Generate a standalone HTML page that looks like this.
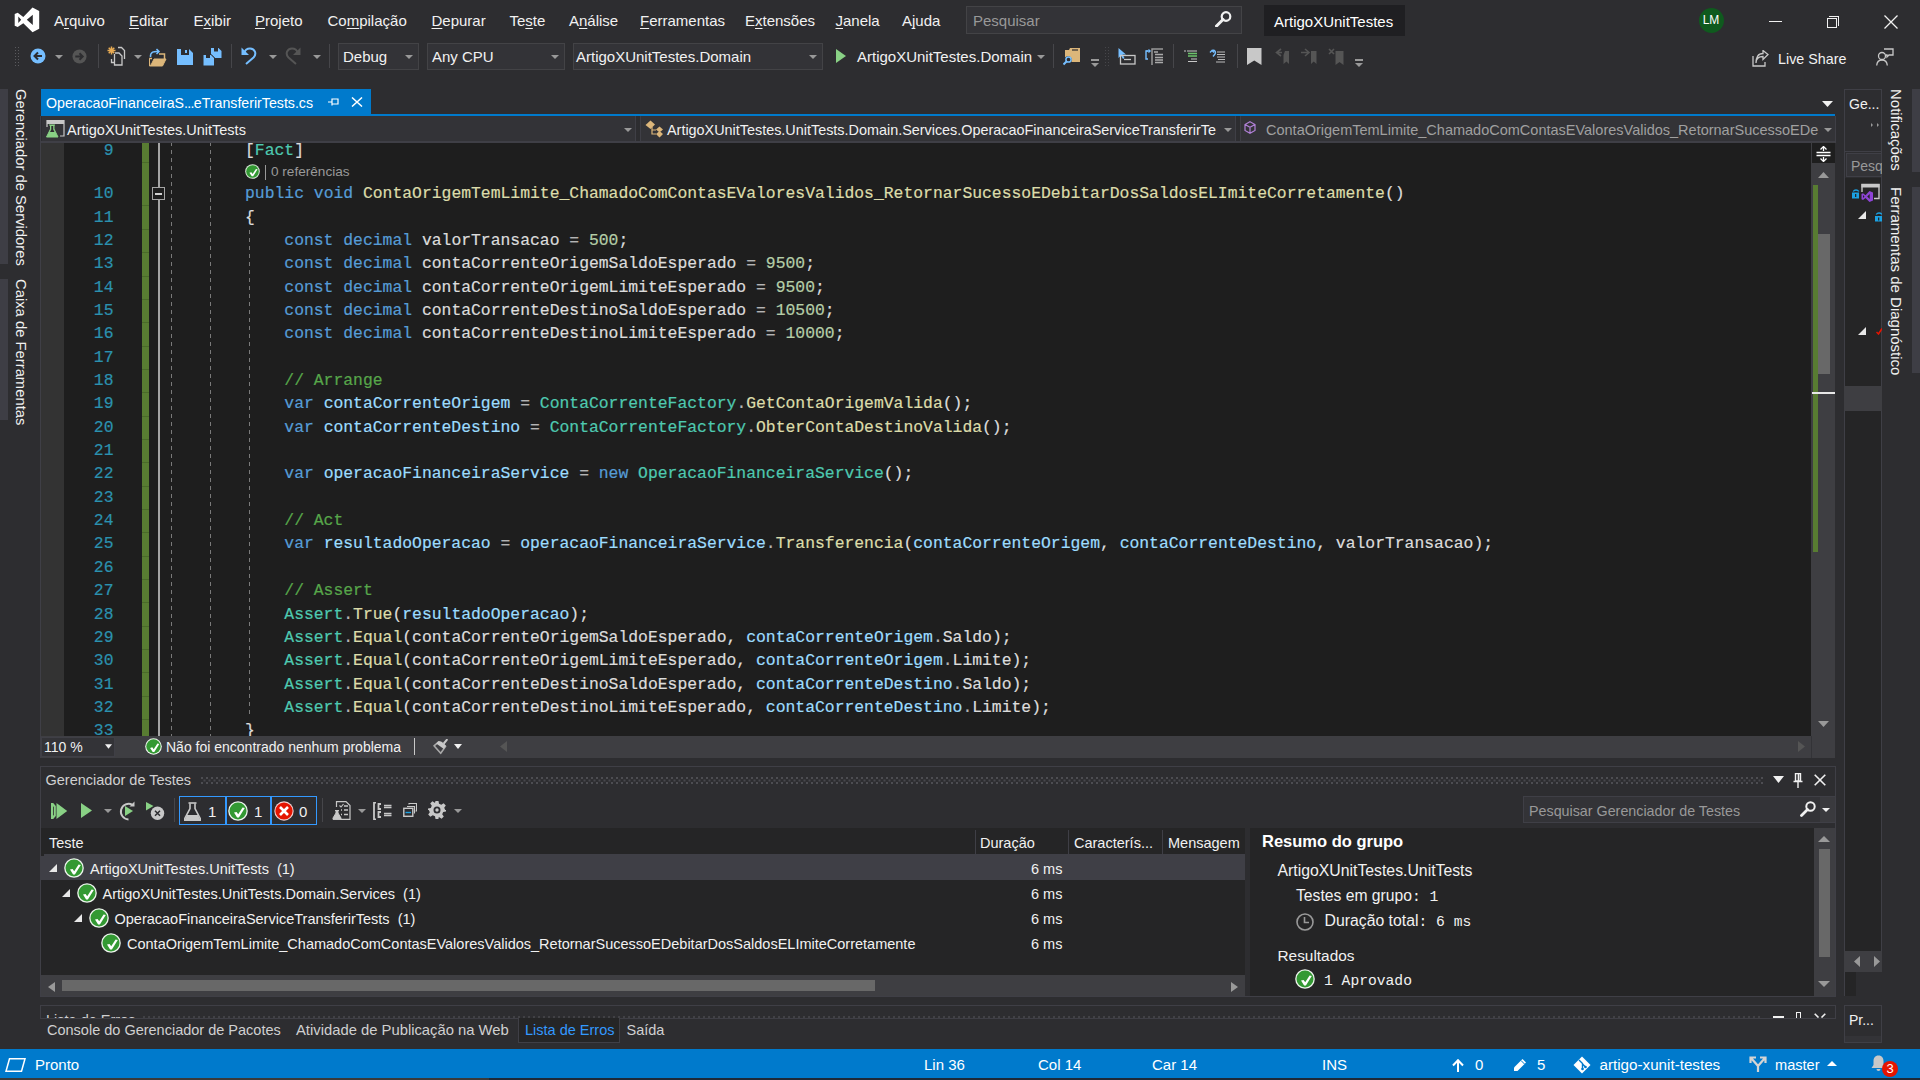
<!DOCTYPE html>
<html><head><meta charset="utf-8">
<style>
*{margin:0;padding:0;box-sizing:border-box}
html,body{width:1920px;height:1080px;overflow:hidden;background:#2d2d30;font-family:"Liberation Sans",sans-serif;color:#f1f1f1}
.a{position:absolute}
.t{position:absolute;white-space:nowrap;line-height:0;top:calc(var(--b) - 0.3465em)}
.m{-webkit-text-stroke:0.2px currentColor;position:absolute;white-space:pre;line-height:0;font-family:"Liberation Mono",monospace;top:calc(var(--b) - 0.26665em)}
.s15{font-size:15px}
.s14{font-size:14px}
u{text-decoration-thickness:1px;text-underline-offset:1.5px;text-decoration-skip-ink:none}
</style></head><body>
<!-- MENU BAR -->
<div class="a" style="left:0;top:0;width:1920px;height:40px;background:#2d2d30"></div>
<svg class="a" style="left:0;top:0" width="50" height="40" viewBox="0 0 50 40"><path fill="#fff" fill-rule="evenodd" d="M32.5 7.6 L39.2 10.9 V28.8 L32.5 32.2 L23.3 23.2 L17.7 27 L14.7 25.7 V13.9 L17.7 12.7 L23.3 16.9 Z M18.3 16.5 L21.2 19.8 L18.3 23.1 Z M32.8 14.8 L26.8 19.8 L32.8 24.9 Z"/></svg>
<div class="t s15" style="left:54px;--b:26px">A<u>r</u>quivo</div>
<div class="t s15" style="left:129px;--b:26px"><u>E</u>ditar</div>
<div class="t s15" style="left:193.5px;--b:26px">E<u>x</u>ibir</div>
<div class="t s15" style="left:255px;--b:26px"><u>P</u>rojeto</div>
<div class="t s15" style="left:327.5px;--b:26px">Co<u>m</u>pilação</div>
<div class="t s15" style="left:431.5px;--b:26px"><u>D</u>epurar</div>
<div class="t s15" style="left:509.5px;--b:26px">Te<u>s</u>te</div>
<div class="t s15" style="left:569px;--b:26px">A<u>n</u>álise</div>
<div class="t s15" style="left:640px;--b:26px"><u>F</u>erramentas</div>
<div class="t s15" style="left:745px;--b:26px">E<u>x</u>tensões</div>
<div class="t s15" style="left:835.5px;--b:26px"><u>J</u>anela</div>
<div class="t s15" style="left:902px;--b:26px">A<u>j</u>uda</div>
<!-- search -->
<div class="a" style="left:966px;top:6px;width:276px;height:28px;background:#333337;border:1px solid #434346"></div>
<div class="t s15" style="left:973px;--b:26px;color:#999">Pesquisar</div>
<svg class="a" style="left:1215px;top:11px" width="17" height="16" viewBox="0 0 17 16"><circle cx="11" cy="5.5" r="4.3" fill="none" stroke="#f1f1f1" stroke-width="2.2"/><path d="M8 8.5 L1.5 15" stroke="#f1f1f1" stroke-width="3" stroke-linecap="round"/></svg>
<div class="a" style="left:1264px;top:5px;width:141px;height:31px;background:#1f1f22"></div>
<div class="t s15" style="left:1274px;--b:27px;color:#fff">ArtigoXUnitTestes</div>
<!-- avatar -->
<div class="a" style="left:1698.5px;top:7.5px;width:25px;height:25px;border-radius:50%;background:#0f5a1e"></div>
<div class="t" style="left:1698.5px;width:25px;text-align:center;font-size:12px;--b:24.5px;color:#fff">LM</div>
<!-- window controls -->
<div class="a" style="left:1769px;top:21px;width:13px;height:1px;background:#f1f1f1"></div>
<div class="a" style="left:1829px;top:16px;width:10px;height:10px;border:1px solid #f1f1f1;border-left:none;border-bottom:none"></div>
<div class="a" style="left:1827px;top:18px;width:10px;height:10px;border:1px solid #f1f1f1;background:#2d2d30"></div>
<svg class="a" style="left:1884px;top:15px" width="14" height="14" viewBox="0 0 14 14"><path d="M0.5 0.5 L13.5 13.5 M13.5 0.5 L0.5 13.5" stroke="#f1f1f1" stroke-width="1.3"/></svg>

<!-- TOOLBAR -->
<div class="a" style="left:14px;top:46px;width:6px;height:21px;background-image:radial-gradient(circle,#5a5a5e 0.8px,transparent 1px);background-size:3px 3px"></div>
<svg class="a" style="left:30px;top:48px" width="16" height="16" viewBox="0 0 16 16"><circle cx="8" cy="8" r="7.5" fill="#75beff"/><path d="M12 8 H5 M8 4.5 L4.5 8 L8 11.5" stroke="#2d2d30" stroke-width="2" fill="none"/></svg>
<svg class="a" style="left:55px;top:55px" width="8" height="4" viewBox="0 0 8 4"><path d="M0 0H8L4 4Z" fill="#999"/></svg>
<svg class="a" style="left:72px;top:49px" width="15" height="15" viewBox="0 0 16 16"><circle cx="8" cy="8" r="7.5" fill="#555"/><path d="M3.5 8 H11 M8 4.5 L11.5 8 L8 11.5" stroke="#2d2d30" stroke-width="2" fill="none"/></svg>
<div class="a" style="left:98px;top:44px;width:1px;height:24px;background:#46464a"></div>
<svg class="a" style="left:107px;top:46px" width="19" height="20" viewBox="0 0 19 20">
<path d="M4.5 0.5 V8.5 M0.5 4.5 H8.5 M1.7 1.7 L7.3 7.3 M7.3 1.7 L1.7 7.3" stroke="#e8ab53" stroke-width="1.5"/>
<path d="M11 1.5 H14.5 L17.5 4.5 V13" stroke="#c8c8c8" stroke-width="1.3" fill="none"/>
<path d="M8 7 H12 L15 10 V19 H7.5 V8" stroke="#c8c8c8" stroke-width="1.3" fill="#2d2d30"/>
<path d="M4.5 13 V16.5 H7" stroke="#c8c8c8" stroke-width="1.3" fill="none"/>
</svg>
<svg class="a" style="left:134px;top:55px" width="8" height="4" viewBox="0 0 8 4"><path d="M0 0H8L4 4Z" fill="#999"/></svg>
<svg class="a" style="left:149px;top:48px" width="18" height="19" viewBox="0 0 18 19">
<path d="M0.5 10.5 V18 H13.5 L17 11 H5 L1.5 18" fill="#dcb67a" stroke="#dcb67a" stroke-width="1"/>
<path d="M1 11 V10.5 H3 M10 6 H15.5 V11" fill="none" stroke="#dcb67a" stroke-width="1.5"/>
<path d="M1.5 9 C1 4 5 3 9.5 3.5 M7.5 1 L10 3.5 L7.5 6" fill="none" stroke="#75beff" stroke-width="1.5"/>
</svg>
<svg class="a" style="left:177px;top:49px" width="16" height="16" viewBox="0 0 16 16"><path d="M0 0 H12 L16 4 V16 H0 Z" fill="#75beff"/><path d="M4 0 V6 H12 V0 Z" fill="#2d2d30"/><rect x="8" y="1" width="2" height="3" fill="#75beff"/></svg>
<svg class="a" style="left:203px;top:47px" width="19" height="19" viewBox="0 0 19 19"><path d="M8 1 H15.5 L18.5 4 V11 H12 L8 7 Z" fill="#75beff"/><path d="M11 0.5 V4.5 H15 V0.5 Z" fill="#2d2d30"/><path d="M0 7.5 H8 L11.5 11 V19 H0 Z" fill="#75beff" stroke="#2d2d30" stroke-width="1"/><path d="M3 7.5 V11 H7 V7.5 Z" fill="#2d2d30"/></svg>
<div class="a" style="left:231px;top:44px;width:1px;height:24px;background:#46464a"></div>
<svg class="a" style="left:241px;top:47px" width="16" height="18" viewBox="0 0 16 18"><path d="M5 17 L12.5 10.5 C16 7 14 1.5 9 1.5 C6 1.5 4 3.5 3.5 5.5" fill="none" stroke="#75beff" stroke-width="2"/><path d="M0.5 0.5 V8 H8 Z" fill="#75beff"/></svg>
<svg class="a" style="left:269px;top:55px" width="8" height="4" viewBox="0 0 8 4"><path d="M0 0H8L4 4Z" fill="#999"/></svg>
<svg class="a" style="left:285px;top:47px" width="16" height="18" viewBox="0 0 16 18"><path d="M11 17 L3.5 10.5 C0 7 2 1.5 7 1.5 C10 1.5 12 3.5 12.5 5.5" fill="none" stroke="#555" stroke-width="2"/><path d="M15.5 0.5 V8 H8 Z" fill="#555"/></svg>
<svg class="a" style="left:313px;top:55px" width="8" height="4" viewBox="0 0 8 4"><path d="M0 0H8L4 4Z" fill="#999"/></svg>
<div class="a" style="left:329px;top:44px;width:1px;height:24px;background:#46464a"></div>
<!-- combos -->
<div class="a" style="left:338px;top:43px;width:81px;height:27px;background:#333337;border:1px solid #434346"></div>
<div class="t s15" style="left:343px;--b:62px">Debug</div>
<svg class="a" style="left:405px;top:55px" width="8" height="4" viewBox="0 0 8 4"><path d="M0 0H8L4 4Z" fill="#999"/></svg>
<div class="a" style="left:427px;top:43px;width:138px;height:27px;background:#333337;border:1px solid #434346"></div>
<div class="t s15" style="left:432px;--b:62px">Any CPU</div>
<svg class="a" style="left:551px;top:55px" width="8" height="4" viewBox="0 0 8 4"><path d="M0 0H8L4 4Z" fill="#999"/></svg>
<div class="a" style="left:573px;top:43px;width:250px;height:27px;background:#333337;border:1px solid #434346"></div>
<div class="t s15" style="left:576px;--b:62px">ArtigoXUnitTestes.Domain</div>
<svg class="a" style="left:809px;top:55px" width="8" height="4" viewBox="0 0 8 4"><path d="M0 0H8L4 4Z" fill="#999"/></svg>
<svg class="a" style="left:836px;top:49px" width="10" height="14" viewBox="0 0 10 14"><path d="M0 0 L10 7 L0 14Z" fill="#89d185"/></svg>
<div class="t s15" style="left:857px;--b:62px">ArtigoXUnitTestes.Domain</div>
<svg class="a" style="left:1037px;top:55px" width="8" height="4" viewBox="0 0 8 4"><path d="M0 0H8L4 4Z" fill="#999"/></svg>
<div class="a" style="left:1053px;top:44px;width:1px;height:24px;background:#46464a"></div>
<svg class="a" style="left:1063px;top:47px" width="18" height="19" viewBox="0 0 18 19"><path d="M2 3 H6 L7 1 H17 V15 H2 Z" fill="#dcb67a"/><path d="M9 3 H15" stroke="#2d2d30" stroke-width="1.2"/><circle cx="5" cy="13" r="3.8" fill="#2d2d30"/><circle cx="5.5" cy="12.5" r="2.6" fill="none" stroke="#75beff" stroke-width="1.5"/><path d="M3.5 14.5 L0.5 17.5" stroke="#75beff" stroke-width="2"/></svg>
<div class="a" style="left:1091px;top:59px;width:8px;height:1.5px;background:#999"></div>
<svg class="a" style="left:1091px;top:63px" width="8" height="4" viewBox="0 0 8 4"><path d="M0 0H8L4 4Z" fill="#999"/></svg>
<div class="a" style="left:1104px;top:46px;width:6px;height:21px;background-image:radial-gradient(circle,#46464a 0.8px,transparent 1px);background-size:3px 3px"></div>
<svg class="a" style="left:1118px;top:48px" width="18" height="17" viewBox="0 0 18 17"><path d="M0.5 0 V10 L3 7.5 L5 11 L6.5 10 L4.5 6.5 H8 Z" fill="#75beff"/><rect x="2.5" y="7.5" width="14.5" height="8.5" fill="none" stroke="#c8c8c8" stroke-width="1.3"/><path d="M6 11.5 H13" stroke="#c8c8c8" stroke-width="1.3"/></svg>
<svg class="a" style="left:1145px;top:48px" width="18" height="18" viewBox="0 0 18 18"><path d="M3 3 H1 V11 H3" fill="none" stroke="#75beff" stroke-width="1.4"/><path d="M1 3 H5 M3.5 1.5 L5.2 3 L3.5 4.5" stroke="#75beff" stroke-width="1.2" fill="none"/><path d="M7 17 V1 H18" stroke="#999" stroke-width="1.5" fill="none"/><path d="M9 4 H13 M10 6.5 H18 M10 9.5 H18 M10 12 H18 M10 14.5 H18" stroke="#aaa" stroke-width="1.3"/></svg>
<div class="a" style="left:1173px;top:44px;width:1px;height:24px;background:#46464a"></div>
<svg class="a" style="left:1184px;top:50px" width="14" height="13" viewBox="0 0 14 13"><path d="M0 1 H2 M3 1 H13 M4 11.5 H13 M7 9 H13" stroke="#c8c8c8" stroke-width="1.2"/><path d="M4 3.5 H13 M4 6 H13" stroke="#6cc36b" stroke-width="1.4"/></svg>
<svg class="a" style="left:1209px;top:49px" width="17" height="14" viewBox="0 0 17 14"><path d="M1 3.5 L3 1.5 L5 3.5 M3 1.5 C6 0.5 7 3 6 5 L4 7.5" fill="none" stroke="#75beff" stroke-width="1.4"/><path d="M8 3 H16 M8 5.5 H16 M8 8 H16 M9 10.5 H16 M7 13 H16" stroke="#bbb" stroke-width="1.2"/></svg>
<div class="a" style="left:1237px;top:44px;width:1px;height:24px;background:#46464a"></div>
<svg class="a" style="left:1247px;top:48px" width="15" height="17" viewBox="0 0 15 17"><path d="M0 0 H14.5 V17 L7.25 12.5 L0 17 Z" fill="#c8c8c8"/></svg>
<svg class="a" style="left:1275px;top:48px" width="15" height="16" viewBox="0 0 15 16"><path d="M6 1 L1.5 4.5 L6 8 M1.5 4.5 H7" stroke="#555" stroke-width="1.6" fill="none"/><path d="M10 3 H14 V16 L11.5 13.5 L8.5 16 V7" fill="#555"/></svg>
<svg class="a" style="left:1301px;top:48px" width="16" height="16" viewBox="0 0 16 16"><path d="M4 1 L8 4.5 L4 8 M0 4.5 H8" stroke="#555" stroke-width="1.6" fill="none"/><path d="M10 3 H15.5 V16 L12.75 13.5 L10 16 Z" fill="#555"/></svg>
<svg class="a" style="left:1328px;top:48px" width="16" height="17" viewBox="0 0 16 17"><path d="M1 1 L6 6 M6 1 L1 6" stroke="#555" stroke-width="1.6"/><path d="M7.5 3 H15.5 V17 L11.5 14 L7.5 17 Z" fill="#555"/></svg>
<div class="a" style="left:1355px;top:59px;width:8px;height:1.5px;background:#999"></div>
<svg class="a" style="left:1355px;top:63px" width="8" height="4" viewBox="0 0 8 4"><path d="M0 0H8L4 4Z" fill="#999"/></svg>
<!-- live share -->
<svg class="a" style="left:1752px;top:50px" width="17" height="17" viewBox="0 0 17 17"><path d="M1 6 V16 H13 V12" fill="none" stroke="#c8c8c8" stroke-width="1.3"/><path d="M4 13 C4 8 7 6.5 11 6.5 V9.5 L16 4.5 L11 0.5 V3.5 C6 3.5 4 7 4 13Z" fill="none" stroke="#c8c8c8" stroke-width="1.3"/></svg>
<div class="t" style="left:1778px;--b:64px;font-size:14.3px">Live Share</div>
<svg class="a" style="left:1876px;top:48px" width="18" height="18" viewBox="0 0 18 18"><circle cx="6" cy="8" r="3.5" fill="none" stroke="#c8c8c8" stroke-width="1.3"/><path d="M0.7 17.5 C1 13 3 12 6 12 C9 12 11 13 11.3 17.5" fill="none" stroke="#c8c8c8" stroke-width="1.3"/><path d="M8 1 H17 V7 H13 L11 9 V7 H10" fill="none" stroke="#c8c8c8" stroke-width="1.3"/></svg>
<!-- LEFT STRIP -->
<div class="a" style="left:0;top:89px;width:8px;height:175px;background:#3e3e45"></div>
<div class="a" style="left:0;top:279px;width:8px;height:141px;background:#3e3e45"></div>
<div class="t" style="left:16px;top:89px;line-height:normal;transform-origin:0 0;transform:translate(13px,0) rotate(90deg);font-size:14.8px">Gerenciador de Servidores</div>
<div class="t" style="left:16px;top:279px;line-height:normal;transform-origin:0 0;transform:translate(13px,0) rotate(90deg);font-size:14.8px">Caixa de Ferramentas</div>
<!-- DOC TAB -->
<div class="a" style="left:41px;top:89px;width:330px;height:25px;background:#007acc"></div>
<div class="a" style="left:41px;top:114px;width:1794px;height:2px;background:#007acc"></div>
<div class="t" style="left:46px;--b:108px;font-size:14.2px;color:#fff">OperacaoFinanceiraS<span style="letter-spacing:-0.7px">...</span>eTransferirTests.cs</div>
<svg class="a" style="left:328px;top:97px" width="11" height="10" viewBox="0 0 11 10"><path d="M0 5 H4 M4 8.5 V1.5 M4.5 2 H10 V7 H4.5" fill="none" stroke="#fff" stroke-width="1.2"/></svg>
<svg class="a" style="left:351px;top:97px" width="12" height="10" viewBox="0 0 12 10"><path d="M1 0.5 L11 9.5 M11 0.5 L1 9.5" stroke="#fff" stroke-width="1.5"/></svg>
<svg class="a" style="left:1822px;top:100.5px" width="11" height="6" viewBox="0 0 11 6"><path d="M0 0H11L5.5 6Z" fill="#f1f1f1"/></svg>
<!-- NAV BAR -->
<div class="a" style="left:40px;top:116px;width:1796px;height:27px;background:#2d2d30;border-left:1px solid #3f3f46;border-right:1px solid #3f3f46;border-bottom:2px solid #3f3f46"></div>
<div class="a" style="left:42px;top:116px;width:594px;height:25px;background:#333337;border-right:1px solid #3f3f46"></div>
<div class="a" style="left:640px;top:116px;width:596px;height:25px;background:#333337;border-left:1px solid #3f3f46;border-right:1px solid #3f3f46"></div>
<div class="a" style="left:1240px;top:116px;width:595px;height:25px;background:#333337;border-left:1px solid #3f3f46"></div>
<svg class="a" style="left:46px;top:120px" width="19" height="18" viewBox="0 0 19 18"><path d="M1 7 V0.5 H18 V16 H14" fill="none" stroke="#c8c8c8" stroke-width="1.2"/><path d="M1 1 H18 V4 H1Z" fill="#c8c8c8"/><path d="M3 5 H9 M4.5 5 V9 L0.5 17 H12 L8 9 V5" fill="#89d185" stroke="#89d185" stroke-width="1"/><path d="M5.3 6 V9.5 L4 12 H8.5 L7.2 9.5 V6Z" fill="#2d2d30"/></svg>
<div class="t" style="left:67px;--b:135px;font-size:14.5px">ArtigoXUnitTestes.UnitTests</div>
<svg class="a" style="left:624px;top:128px" width="8" height="4" viewBox="0 0 8 4"><path d="M0 0H8L4 4Z" fill="#999"/></svg>
<svg class="a" style="left:645px;top:120px" width="19" height="18" viewBox="0 0 19 18"><path d="M0.5 5 L5.5 0.5 L10 4.5 L5.5 9 Z" fill="#dcb67a"/><path d="M11 9.5 L14.5 6.5 L18 9.5 L14.5 12.5Z M11 14 L14.5 11 L18 14 L14.5 17.5Z" fill="#dcb67a"/><path d="M7 7 V14 H11 M7 10 H11" fill="none" stroke="#dcb67a" stroke-width="1.2"/></svg>
<div class="t" style="left:667px;--b:135px;font-size:14.4px">ArtigoXUnitTestes.UnitTests.Domain.Services.OperacaoFinanceiraServiceTransferirTe</div>
<svg class="a" style="left:1224px;top:128px" width="8" height="4" viewBox="0 0 8 4"><path d="M0 0H8L4 4Z" fill="#999"/></svg>
<svg class="a" style="left:1244px;top:121px" width="12" height="13" viewBox="0 0 12 13"><path d="M6 0.8 L11 3.5 V9.5 L6 12.2 L1 9.5 V3.5 Z M1 3.5 L6 6.3 L11 3.5 M6 6.3 V12.2" fill="none" stroke="#b180d7" stroke-width="1.2"/></svg>
<div class="t" style="left:1266px;--b:135px;font-size:14.5px;color:#a0a0a0">ContaOrigemTemLimite_ChamadoComContasEValoresValidos_RetornarSucessoEDe</div>
<svg class="a" style="left:1824px;top:128px" width="8" height="4" viewBox="0 0 8 4"><path d="M0 0H8L4 4Z" fill="#999"/></svg>

<!-- EDITOR FRAME -->
<div class="a" style="left:40px;top:142px;width:1px;height:616px;background:#3f3f46"></div>
<div class="a" style="left:41px;top:143px;width:1770px;height:593px;background:#1e1e1e"></div>
<div class="a" style="left:41px;top:143px;width:23px;height:593px;background:#333333"></div>
<!-- vscroll -->
<div class="a" style="left:1811px;top:142px;width:24px;height:594px;background:#3e3e42"></div>
<div class="a" style="left:1812px;top:143px;width:23px;height:20px;background:#1e1e1e"></div>
<svg class="a" style="left:1816px;top:146px" width="15" height="16" viewBox="0 0 15 16"><path d="M0.5 6.5 H14.5 M0.5 9.5 H14.5" stroke="#fff" stroke-width="1.6"/><path d="M7.5 1 V5 M7.5 11 V15" stroke="#fff" stroke-width="1.3"/><path d="M4.5 3.5 L7.5 0.5 L10.5 3.5 M4.5 12.5 L7.5 15.5 L10.5 12.5" fill="none" stroke="#fff" stroke-width="1.3"/></svg>
<svg class="a" style="left:1818px;top:172px" width="11" height="6" viewBox="0 0 11 6"><path d="M0 6H11L5.5 0Z" fill="#999"/></svg>
<div class="a" style="left:1813px;top:185px;width:5px;height:367px;background:#587c32"></div>
<div class="a" style="left:1818px;top:234px;width:12px;height:140px;background:#686868"></div>
<div class="a" style="left:1812px;top:392px;width:23px;height:2px;background:#e8e8e8"></div>
<svg class="a" style="left:1818px;top:721px" width="11" height="6" viewBox="0 0 11 6"><path d="M0 0H11L5.5 6Z" fill="#999"/></svg>
<!-- editor bottom bar -->
<div class="a" style="left:41px;top:736px;width:1794px;height:22px;background:#3e3e42"></div>
<div class="a" style="left:41px;top:737px;width:74px;height:20px;background:#333337;border:1px solid #3f3f46"></div>
<div class="t" style="left:44px;--b:752px;font-size:14px">110 %</div>
<svg class="a" style="left:105px;top:744px" width="7" height="5" viewBox="0 0 8 5"><path d="M0 0H8L4 5Z" fill="#f1f1f1"/></svg>
<svg class="a" style="left:145px;top:738px" width="17" height="17" viewBox="0 0 17 17"><circle cx="8.5" cy="8.5" r="8.3" fill="#eef5ee"/><circle cx="8.5" cy="8.5" r="7.2" fill="#339933"/><path d="M5.1 9.9 L7.3 9.3 L8.7 11.3 L12.4 5.6 L14.3 5.9 L9.3 14 L7.7 14 Z" fill="#fff"/></svg>
<div class="t" style="left:166px;--b:752px;font-size:14px">Não foi encontrado nenhum problema</div>
<div class="a" style="left:414px;top:738px;width:1px;height:17px;background:#c8c8c8"></div>
<svg class="a" style="left:433px;top:739px" width="15" height="16" viewBox="0 0 15 16"><path d="M13.8 0.8 L11.2 4" stroke="#c8c8c8" stroke-width="2" stroke-linecap="round"/><path d="M1 6.8 L5.8 2.8 L12.6 7.4 L7.7 14.3 Z" fill="none" stroke="#a8a8a8" stroke-width="1.6" stroke-linejoin="round"/><path d="M5 2.5 C7.5 1.5 10 3 12.9 6.8 L10.9 10 L3.2 4.4 Z" fill="#c8c8c8"/></svg>
<svg class="a" style="left:454px;top:744px" width="8" height="5" viewBox="0 0 8 5"><path d="M0 0H8L4 5Z" fill="#f1f1f1"/></svg>
<svg class="a" style="left:500px;top:741px" width="7" height="11" viewBox="0 0 7 11"><path d="M7 0V11L0 5.5Z" fill="#555"/></svg>
<svg class="a" style="left:1798px;top:741px" width="7" height="11" viewBox="0 0 7 11"><path d="M0 0V11L7 5.5Z" fill="#555"/></svg>
<div class="a" style="left:1811px;top:736px;width:1px;height:22px;background:#333337"></div>

<!-- RIGHT SIDE PANEL -->
<div class="a" style="left:1844px;top:89px;width:38px;height:63px;background:#2d2d30;border:1px solid #3f3f46"></div>
<div class="t" style="left:1849px;--b:109px;font-size:14px">Ge...</div>
<svg class="a" style="left:1871px;top:123px" width="8" height="4" viewBox="0 0 8 4"><path d="M0 0V4L2 2Z M6 0V4L8 2Z" fill="#999"/></svg>
<div class="a" style="left:1844px;top:151px;width:38px;height:28px;background:#2d2d30;border:1px solid #3f3f46"></div>
<div class="a" style="left:1846px;top:153px;width:36px;height:24px;background:#333337;border:1px solid #3f3f46"></div>
<div class="t" style="left:1851px;--b:171px;font-size:14px;color:#999;width:31px;overflow:hidden;line-height:normal;top:158px">Pesquisar</div>
<div class="a" style="left:1844px;top:178px;width:38px;height:818px;background:#252526;border-left:1px solid #3f3f46;border-right:1px solid #3f3f46"></div>
<div class="a" style="left:1844px;top:386px;width:38px;height:25px;background:#3e3e42"></div>
<svg class="a" style="left:1851px;top:183px" width="30" height="21" viewBox="0 0 30 21"><path d="M2.2 8.5 A3.3 3.3 0 0 1 7.8 8.5" fill="none" stroke="#1ba1e2" stroke-width="1.4"/><rect x="1" y="9.5" width="7" height="6" fill="#1ba1e2"/><rect x="4" y="11" width="1.3" height="3" fill="#252526"/><path d="M11 9 V1.5 H28 V15.5 H23" fill="none" stroke="#c8c8c8" stroke-width="1.4"/><rect x="10.5" y="1" width="18" height="3.5" fill="#c8c8c8"/><path fill="#8e44d6" fill-rule="evenodd" d="M18.5 8 L22 9.5 V17.5 L18.5 19 L14.5 15 L12 17 L10.5 16.2 V11 L12 10.2 L14.5 12.2 Z M12 12 V15 L13.5 13.5Z M18.7 11 L16.2 13.5 L18.7 16Z"/></svg>
<svg class="a" style="left:1858px;top:211px" width="8" height="8" viewBox="0 0 8 8"><path d="M8 0V8H0Z" fill="#e8e8e8"/></svg>
<svg class="a" style="left:1874px;top:211px" width="8" height="11" viewBox="0 0 8 11"><path d="M2.2 3.5 A3.3 3.3 0 0 1 7.8 3.5" fill="none" stroke="#1ba1e2" stroke-width="1.4"/><rect x="1" y="5" width="7" height="5.5" fill="#1ba1e2"/><rect x="4" y="6.5" width="1.3" height="3" fill="#252526"/></svg>
<svg class="a" style="left:1858px;top:327px" width="8" height="8" viewBox="0 0 8 8"><path d="M8 0V8H0Z" fill="#e8e8e8"/></svg>
<svg class="a" style="left:1876px;top:328px" width="6" height="7" viewBox="0 0 6 7"><path d="M0.5 4 L2.5 6 L6 0.5" fill="none" stroke="#e51400" stroke-width="1.5"/></svg>
<div class="a" style="left:1844px;top:951px;width:38px;height:21px;background:#3e3e42"></div>
<svg class="a" style="left:1854px;top:956px" width="26" height="11" viewBox="0 0 26 11"><path d="M6 0V11L0 5.5Z M20 0V11L26 5.5Z" fill="#999"/></svg>
<div class="a" style="left:1856px;top:972px;width:26px;height:24px;background:#2d2d30"></div>
<div class="a" style="left:1844px;top:1005px;width:38px;height:38px;background:#2d2d30;border:1px solid #3f3f46"></div>
<div class="a" style="left:1845px;top:1036px;width:36px;height:6px;background:#333337"></div>
<div class="t" style="left:1849px;--b:1025px;font-size:14px">Pr...</div>
<!-- right vertical tabs -->
<div class="a" style="left:1912px;top:89px;width:8px;height:83px;background:#3e3e45"></div>
<div class="a" style="left:1912px;top:187px;width:8px;height:186px;background:#3e3e45"></div>
<div class="t" style="left:1892px;top:89px;line-height:normal;transform-origin:0 0;transform:translate(13px,0) rotate(90deg);font-size:15px">Notificações</div>
<div class="t" style="left:1892px;top:187px;line-height:normal;transform-origin:0 0;transform:translate(13px,0) rotate(90deg);font-size:15px">Ferramentas de Diagnóstico</div>
<div class="a" style="left:0;top:142px;width:1811px;height:594px;overflow:hidden;clip-path:inset(1px 0 0 0)">
<div class="a" style="left:171px;top:0px;width:1.4px;height:594px;background-image:linear-gradient(#7a7a7a 50%,transparent 50%);background-size:1px 8px"></div>
<div class="a" style="left:210px;top:0px;width:1.4px;height:594px;background-image:linear-gradient(#7a7a7a 50%,transparent 50%);background-size:1px 8px"></div>
<div class="a" style="left:249px;top:88px;width:1.4px;height:488px;background-image:linear-gradient(#7a7a7a 50%,transparent 50%);background-size:1px 8px"></div>
<div class="a" style="left:158px;top:0;width:2px;height:594px;background:#a5a5a5"></div>
<div class="a" style="left:152px;top:45px;width:13px;height:13px;background:#1e1e1e;border:1px solid #a5a5a5"></div>
<div class="a" style="left:155px;top:51px;width:7px;height:1.5px;background:#d0d0d0"></div>
<div class="a" style="left:142px;top:0;width:7px;height:594px;background:#587c32"></div>
<div class="a" style="left:142px;top:20.15px;width:7px;height:1px;background:#4a6a2a"></div>
<div class="a" style="left:142px;top:63.45px;width:7px;height:1px;background:#4a6a2a"></div>
<div class="a" style="left:142px;top:86.80px;width:7px;height:1px;background:#4a6a2a"></div>
<div class="a" style="left:142px;top:110.15px;width:7px;height:1px;background:#4a6a2a"></div>
<div class="a" style="left:142px;top:133.50px;width:7px;height:1px;background:#4a6a2a"></div>
<div class="a" style="left:142px;top:156.85px;width:7px;height:1px;background:#4a6a2a"></div>
<div class="a" style="left:142px;top:180.20px;width:7px;height:1px;background:#4a6a2a"></div>
<div class="a" style="left:142px;top:203.55px;width:7px;height:1px;background:#4a6a2a"></div>
<div class="a" style="left:142px;top:226.90px;width:7px;height:1px;background:#4a6a2a"></div>
<div class="a" style="left:142px;top:250.25px;width:7px;height:1px;background:#4a6a2a"></div>
<div class="a" style="left:142px;top:273.60px;width:7px;height:1px;background:#4a6a2a"></div>
<div class="a" style="left:142px;top:296.95px;width:7px;height:1px;background:#4a6a2a"></div>
<div class="a" style="left:142px;top:320.30px;width:7px;height:1px;background:#4a6a2a"></div>
<div class="a" style="left:142px;top:343.65px;width:7px;height:1px;background:#4a6a2a"></div>
<div class="a" style="left:142px;top:367.00px;width:7px;height:1px;background:#4a6a2a"></div>
<div class="a" style="left:142px;top:390.35px;width:7px;height:1px;background:#4a6a2a"></div>
<div class="a" style="left:142px;top:413.70px;width:7px;height:1px;background:#4a6a2a"></div>
<div class="a" style="left:142px;top:437.05px;width:7px;height:1px;background:#4a6a2a"></div>
<div class="a" style="left:142px;top:460.40px;width:7px;height:1px;background:#4a6a2a"></div>
<div class="a" style="left:142px;top:483.75px;width:7px;height:1px;background:#4a6a2a"></div>
<div class="a" style="left:142px;top:507.10px;width:7px;height:1px;background:#4a6a2a"></div>
<div class="a" style="left:142px;top:530.45px;width:7px;height:1px;background:#4a6a2a"></div>
<div class="a" style="left:142px;top:553.80px;width:7px;height:1px;background:#4a6a2a"></div>
<div class="a" style="left:142px;top:577.15px;width:7px;height:1px;background:#4a6a2a"></div>
<div class="a" style="left:142px;top:600.50px;width:7px;height:1px;background:#4a6a2a"></div>
<div class="m" style="left:103.6675px;--b:13.30px;font-size:16.385px;color:#2b91af">9</div>
<div class="m" style="left:166.4px;--b:13.30px;font-size:16.385px"><span style="color:#dcdcdc">        [</span><span style="color:#4ec9b0">Fact</span><span style="color:#dcdcdc">]</span></div>
<div class="m" style="left:93.83500000000001px;--b:56.60px;font-size:16.385px;color:#2b91af">10</div>
<div class="m" style="left:166.4px;--b:56.60px;font-size:16.385px"><span style="color:#dcdcdc">        </span><span style="color:#569cd6">public</span><span style="color:#dcdcdc"> </span><span style="color:#569cd6">void</span><span style="color:#dcdcdc"> </span><span style="color:#dcdcaa">ContaOrigemTemLimite_ChamadoComContasEValoresValidos_RetornarSucessoEDebitarDosSaldosELImiteCorretamente</span><span style="color:#dcdcdc">()</span></div>
<div class="m" style="left:93.83500000000001px;--b:79.95px;font-size:16.385px;color:#2b91af">11</div>
<div class="m" style="left:166.4px;--b:79.95px;font-size:16.385px"><span style="color:#dcdcdc">        {</span></div>
<div class="m" style="left:93.83500000000001px;--b:103.30px;font-size:16.385px;color:#2b91af">12</div>
<div class="m" style="left:166.4px;--b:103.30px;font-size:16.385px"><span style="color:#dcdcdc">            </span><span style="color:#569cd6">const</span><span style="color:#dcdcdc"> </span><span style="color:#569cd6">decimal</span><span style="color:#dcdcdc"> valorTransacao </span><span style="color:#b4b4b4">=</span><span style="color:#dcdcdc"> </span><span style="color:#b5cea8">500</span><span style="color:#dcdcdc">;</span></div>
<div class="m" style="left:93.83500000000001px;--b:126.65px;font-size:16.385px;color:#2b91af">13</div>
<div class="m" style="left:166.4px;--b:126.65px;font-size:16.385px"><span style="color:#dcdcdc">            </span><span style="color:#569cd6">const</span><span style="color:#dcdcdc"> </span><span style="color:#569cd6">decimal</span><span style="color:#dcdcdc"> contaCorrenteOrigemSaldoEsperado </span><span style="color:#b4b4b4">=</span><span style="color:#dcdcdc"> </span><span style="color:#b5cea8">9500</span><span style="color:#dcdcdc">;</span></div>
<div class="m" style="left:93.83500000000001px;--b:150.00px;font-size:16.385px;color:#2b91af">14</div>
<div class="m" style="left:166.4px;--b:150.00px;font-size:16.385px"><span style="color:#dcdcdc">            </span><span style="color:#569cd6">const</span><span style="color:#dcdcdc"> </span><span style="color:#569cd6">decimal</span><span style="color:#dcdcdc"> contaCorrenteOrigemLimiteEsperado </span><span style="color:#b4b4b4">=</span><span style="color:#dcdcdc"> </span><span style="color:#b5cea8">9500</span><span style="color:#dcdcdc">;</span></div>
<div class="m" style="left:93.83500000000001px;--b:173.35px;font-size:16.385px;color:#2b91af">15</div>
<div class="m" style="left:166.4px;--b:173.35px;font-size:16.385px"><span style="color:#dcdcdc">            </span><span style="color:#569cd6">const</span><span style="color:#dcdcdc"> </span><span style="color:#569cd6">decimal</span><span style="color:#dcdcdc"> contaCorrenteDestinoSaldoEsperado </span><span style="color:#b4b4b4">=</span><span style="color:#dcdcdc"> </span><span style="color:#b5cea8">10500</span><span style="color:#dcdcdc">;</span></div>
<div class="m" style="left:93.83500000000001px;--b:196.70px;font-size:16.385px;color:#2b91af">16</div>
<div class="m" style="left:166.4px;--b:196.70px;font-size:16.385px"><span style="color:#dcdcdc">            </span><span style="color:#569cd6">const</span><span style="color:#dcdcdc"> </span><span style="color:#569cd6">decimal</span><span style="color:#dcdcdc"> contaCorrenteDestinoLimiteEsperado </span><span style="color:#b4b4b4">=</span><span style="color:#dcdcdc"> </span><span style="color:#b5cea8">10000</span><span style="color:#dcdcdc">;</span></div>
<div class="m" style="left:93.83500000000001px;--b:220.05px;font-size:16.385px;color:#2b91af">17</div>
<div class="m" style="left:93.83500000000001px;--b:243.40px;font-size:16.385px;color:#2b91af">18</div>
<div class="m" style="left:166.4px;--b:243.40px;font-size:16.385px"><span style="color:#dcdcdc">            </span><span style="color:#57a64a">// Arrange</span></div>
<div class="m" style="left:93.83500000000001px;--b:266.75px;font-size:16.385px;color:#2b91af">19</div>
<div class="m" style="left:166.4px;--b:266.75px;font-size:16.385px"><span style="color:#dcdcdc">            </span><span style="color:#569cd6">var</span><span style="color:#dcdcdc"> </span><span style="color:#9cdcfe">contaCorrenteOrigem</span><span style="color:#dcdcdc"> </span><span style="color:#b4b4b4">=</span><span style="color:#dcdcdc"> </span><span style="color:#4ec9b0">ContaCorrenteFactory</span><span style="color:#b4b4b4">.</span><span style="color:#dcdcaa">GetContaOrigemValida</span><span style="color:#dcdcdc">();</span></div>
<div class="m" style="left:93.83500000000001px;--b:290.10px;font-size:16.385px;color:#2b91af">20</div>
<div class="m" style="left:166.4px;--b:290.10px;font-size:16.385px"><span style="color:#dcdcdc">            </span><span style="color:#569cd6">var</span><span style="color:#dcdcdc"> </span><span style="color:#9cdcfe">contaCorrenteDestino</span><span style="color:#dcdcdc"> </span><span style="color:#b4b4b4">=</span><span style="color:#dcdcdc"> </span><span style="color:#4ec9b0">ContaCorrenteFactory</span><span style="color:#b4b4b4">.</span><span style="color:#dcdcaa">ObterContaDestinoValida</span><span style="color:#dcdcdc">();</span></div>
<div class="m" style="left:93.83500000000001px;--b:313.45px;font-size:16.385px;color:#2b91af">21</div>
<div class="m" style="left:93.83500000000001px;--b:336.80px;font-size:16.385px;color:#2b91af">22</div>
<div class="m" style="left:166.4px;--b:336.80px;font-size:16.385px"><span style="color:#dcdcdc">            </span><span style="color:#569cd6">var</span><span style="color:#dcdcdc"> </span><span style="color:#9cdcfe">operacaoFinanceiraService</span><span style="color:#dcdcdc"> </span><span style="color:#b4b4b4">=</span><span style="color:#dcdcdc"> </span><span style="color:#569cd6">new</span><span style="color:#dcdcdc"> </span><span style="color:#4ec9b0">OperacaoFinanceiraService</span><span style="color:#dcdcdc">();</span></div>
<div class="m" style="left:93.83500000000001px;--b:360.15px;font-size:16.385px;color:#2b91af">23</div>
<div class="m" style="left:93.83500000000001px;--b:383.50px;font-size:16.385px;color:#2b91af">24</div>
<div class="m" style="left:166.4px;--b:383.50px;font-size:16.385px"><span style="color:#dcdcdc">            </span><span style="color:#57a64a">// Act</span></div>
<div class="m" style="left:93.83500000000001px;--b:406.85px;font-size:16.385px;color:#2b91af">25</div>
<div class="m" style="left:166.4px;--b:406.85px;font-size:16.385px"><span style="color:#dcdcdc">            </span><span style="color:#569cd6">var</span><span style="color:#dcdcdc"> </span><span style="color:#9cdcfe">resultadoOperacao</span><span style="color:#dcdcdc"> </span><span style="color:#b4b4b4">=</span><span style="color:#dcdcdc"> </span><span style="color:#9cdcfe">operacaoFinanceiraService</span><span style="color:#b4b4b4">.</span><span style="color:#dcdcaa">Transferencia</span><span style="color:#dcdcdc">(</span><span style="color:#9cdcfe">contaCorrenteOrigem</span><span style="color:#dcdcdc">, </span><span style="color:#9cdcfe">contaCorrenteDestino</span><span style="color:#dcdcdc">, </span><span style="color:#dcdcdc">valorTransacao</span><span style="color:#dcdcdc">);</span></div>
<div class="m" style="left:93.83500000000001px;--b:430.20px;font-size:16.385px;color:#2b91af">26</div>
<div class="m" style="left:93.83500000000001px;--b:453.55px;font-size:16.385px;color:#2b91af">27</div>
<div class="m" style="left:166.4px;--b:453.55px;font-size:16.385px"><span style="color:#dcdcdc">            </span><span style="color:#57a64a">// Assert</span></div>
<div class="m" style="left:93.83500000000001px;--b:476.90px;font-size:16.385px;color:#2b91af">28</div>
<div class="m" style="left:166.4px;--b:476.90px;font-size:16.385px"><span style="color:#dcdcdc">            </span><span style="color:#4ec9b0">Assert</span><span style="color:#b4b4b4">.</span><span style="color:#dcdcaa">True</span><span style="color:#dcdcdc">(</span><span style="color:#9cdcfe">resultadoOperacao</span><span style="color:#dcdcdc">);</span></div>
<div class="m" style="left:93.83500000000001px;--b:500.25px;font-size:16.385px;color:#2b91af">29</div>
<div class="m" style="left:166.4px;--b:500.25px;font-size:16.385px"><span style="color:#dcdcdc">            </span><span style="color:#4ec9b0">Assert</span><span style="color:#b4b4b4">.</span><span style="color:#dcdcaa">Equal</span><span style="color:#dcdcdc">(contaCorrenteOrigemSaldoEsperado, </span><span style="color:#9cdcfe">contaCorrenteOrigem</span><span style="color:#b4b4b4">.</span><span style="color:#dcdcdc">Saldo</span><span style="color:#dcdcdc">);</span></div>
<div class="m" style="left:93.83500000000001px;--b:523.60px;font-size:16.385px;color:#2b91af">30</div>
<div class="m" style="left:166.4px;--b:523.60px;font-size:16.385px"><span style="color:#dcdcdc">            </span><span style="color:#4ec9b0">Assert</span><span style="color:#b4b4b4">.</span><span style="color:#dcdcaa">Equal</span><span style="color:#dcdcdc">(contaCorrenteOrigemLimiteEsperado, </span><span style="color:#9cdcfe">contaCorrenteOrigem</span><span style="color:#b4b4b4">.</span><span style="color:#dcdcdc">Limite</span><span style="color:#dcdcdc">);</span></div>
<div class="m" style="left:93.83500000000001px;--b:546.95px;font-size:16.385px;color:#2b91af">31</div>
<div class="m" style="left:166.4px;--b:546.95px;font-size:16.385px"><span style="color:#dcdcdc">            </span><span style="color:#4ec9b0">Assert</span><span style="color:#b4b4b4">.</span><span style="color:#dcdcaa">Equal</span><span style="color:#dcdcdc">(contaCorrenteDestinoSaldoEsperado, </span><span style="color:#9cdcfe">contaCorrenteDestino</span><span style="color:#b4b4b4">.</span><span style="color:#dcdcdc">Saldo</span><span style="color:#dcdcdc">);</span></div>
<div class="m" style="left:93.83500000000001px;--b:570.30px;font-size:16.385px;color:#2b91af">32</div>
<div class="m" style="left:166.4px;--b:570.30px;font-size:16.385px"><span style="color:#dcdcdc">            </span><span style="color:#4ec9b0">Assert</span><span style="color:#b4b4b4">.</span><span style="color:#dcdcaa">Equal</span><span style="color:#dcdcdc">(contaCorrenteDestinoLimiteEsperado, </span><span style="color:#9cdcfe">contaCorrenteDestino</span><span style="color:#b4b4b4">.</span><span style="color:#dcdcdc">Limite</span><span style="color:#dcdcdc">);</span></div>
<div class="m" style="left:93.83500000000001px;--b:593.65px;font-size:16.385px;color:#2b91af">33</div>
<div class="m" style="left:166.4px;--b:593.65px;font-size:16.385px"><span style="color:#dcdcdc">        }</span></div>
<svg class="a" style="left:245px;top:22px" width="15" height="15" viewBox="0 0 15 15"><circle cx="7.5" cy="7.5" r="7.3" fill="#d8e8d8"/><circle cx="7.5" cy="7.5" r="6.3" fill="#339933"/><path d="M4.4 8.7 L6.4 8.2 L7.6 10 L10.9 5 L12.6 5.3 L8.2 12.3 L6.8 12.3 Z" fill="#fff"/></svg>
<div class="a" style="left:265px;top:23px;width:1px;height:15px;background:#999"></div>
<div class="t" style="left:271px;--b:35px;font-size:13.6px;color:#999">0 referências</div>
</div>
<!-- TEST EXPLORER -->
<div class="a" style="left:40px;top:766px;width:1796px;height:231px;background:#2d2d30;border:1px solid #3f3f46"></div>
<div class="t" style="left:45.5px;--b:785px;font-size:14.5px;color:#d0d0d0">Gerenciador de Testes</div>
<div class="a" style="left:201px;top:777px;width:1562px;height:7px;background-image:radial-gradient(circle at 1px 1px,#4d4d52 0.75px,transparent 1px),radial-gradient(circle at 1px 1px,#46464b 0.75px,transparent 1px);background-size:5px 5px,5px 5px;background-position:0 0,2.5px 2.5px"></div>
<svg class="a" style="left:1773px;top:776px" width="11" height="7" viewBox="0 0 11 7"><path d="M0 0H11L5.5 7Z" fill="#f1f1f1"/></svg>
<svg class="a" style="left:1793px;top:773px" width="10" height="15" viewBox="0 0 10 15"><path d="M2.5 0.5 H7.5 V8 H2.5 Z M0.5 8.5 H9.5 M5 8.5 V15" fill="none" stroke="#f1f1f1" stroke-width="1.4"/><path d="M5.5 1 V8" stroke="#f1f1f1" stroke-width="1.6"/></svg>
<svg class="a" style="left:1814px;top:774px" width="12" height="12" viewBox="0 0 12 12"><path d="M0.7 0.7 L11.3 11.3 M11.3 0.7 L0.7 11.3" stroke="#f1f1f1" stroke-width="1.6"/></svg>
<!-- test toolbar -->
<svg class="a" style="left:50px;top:802px" width="18" height="18" viewBox="0 0 18 18"><path d="M1 1 H3.2 L5.8 4 V14 L3.2 17 H1 Z M3.2 4.2 V13.8 L4 13 V5Z" fill="#89d185" fill-rule="evenodd"/><path d="M6.5 1 L17.2 9 L6.5 17Z" fill="#89d185"/></svg>
<svg class="a" style="left:81px;top:803px" width="11" height="15" viewBox="0 0 11 15"><path d="M0 0 L11 7.5 L0 15Z" fill="#89d185"/></svg>
<svg class="a" style="left:104px;top:809px" width="8" height="4" viewBox="0 0 8 4"><path d="M0 0H8L4 4Z" fill="#999"/></svg>
<svg class="a" style="left:118px;top:801px" width="20" height="20" viewBox="0 0 20 20"><path d="M14.5 3.8 A7.8 7.8 0 1 0 10.5 18.4" fill="none" stroke="#c8c8c8" stroke-width="2"/><path d="M11.5 5.5 H16.5 V0.5 Z" fill="#c8c8c8"/><path d="M7 5 L15 10 L7 15Z" fill="#89d185"/></svg>
<svg class="a" style="left:145px;top:801px" width="20" height="20" viewBox="0 0 20 20"><path d="M1 1 L8.5 5 L1 9.5Z" fill="#89d185"/><circle cx="12.5" cy="12.3" r="6.7" fill="#c8c8c8"/><path d="M10 9.8 L15 14.8 M15 9.8 L10 14.8" stroke="#2d2d30" stroke-width="1.5"/></svg>
<div class="a" style="left:174px;top:798px;width:1px;height:24px;background:#46464a"></div>
<div class="a" style="left:179px;top:796px;width:138px;height:29px;border:1.5px solid #3399ff"></div>
<div class="a" style="left:225px;top:797px;width:1.5px;height:27px;background:#3399ff"></div>
<div class="a" style="left:270px;top:797px;width:1.5px;height:27px;background:#3399ff"></div>
<svg class="a" style="left:184px;top:802px" width="17" height="19" viewBox="0 0 17 19"><path d="M4.5 1 H12.5" stroke="#c8c8c8" stroke-width="1.6"/><path d="M6 1.5 V6.5 L0.5 17 V18.5 H16.5 V17 L11 6.5 V1.5" fill="none" stroke="#c8c8c8" stroke-width="1.6"/><path d="M3 13 H14 L16.5 18 H0.5Z" fill="#c8c8c8"/></svg>
<div class="t" style="left:208px;--b:817px;font-size:15px">1</div>
<svg class="a" style="left:228px;top:801px" width="20" height="20" viewBox="0 0 20 20"><circle cx="10" cy="10" r="9.8" fill="#eef5ee"/><circle cx="10" cy="10" r="8.5" fill="#339933"/><path d="M6 11.6 L8.6 10.9 L10.2 13.3 L14.6 6.6 L16.8 7 L10.9 16.4 L9.1 16.4 Z" fill="#fff"/></svg>
<div class="t" style="left:254px;--b:817px;font-size:15px">1</div>
<svg class="a" style="left:274px;top:801px" width="20" height="20" viewBox="0 0 20 20"><circle cx="10" cy="10" r="9.7" fill="#f2d0d0"/><circle cx="10" cy="10" r="8.6" fill="#e51400"/><path d="M6 6 L14 14 M14 6 L6 14" stroke="#fff" stroke-width="2.6"/></svg>
<div class="t" style="left:299px;--b:817px;font-size:15px">0</div>
<div class="a" style="left:322px;top:798px;width:1px;height:24px;background:#46464a"></div>
<svg class="a" style="left:332px;top:801px" width="19" height="19" viewBox="0 0 19 19"><path d="M4.5 6 V0.6 H14 L18 4.6 V18.4 H9" fill="none" stroke="#c8c8c8" stroke-width="1.2"/><path d="M7.5 4.5 L9 6 L11.5 3" fill="none" stroke="#c8c8c8" stroke-width="1.1"/><path d="M12 5 H16 M12 9 H16 M12 13.5 H16 M9 9 H10 M9 13.5 H10" stroke="#c8c8c8" stroke-width="1.3"/><path d="M3 9.5 H7 M4 9.5 V12 L1 17 V18.4 H9 V17 L6 12 V9.5" fill="#c8c8c8" stroke="#c8c8c8" stroke-width="1"/></svg>
<svg class="a" style="left:358px;top:809px" width="8" height="4" viewBox="0 0 8 4"><path d="M0 0H8L4 4Z" fill="#999"/></svg>
<svg class="a" style="left:373px;top:802px" width="19" height="18" viewBox="0 0 19 18"><path d="M3 0.5 H1 V17.5 H3" fill="none" stroke="#c8c8c8" stroke-width="1.8"/><path d="M8 2 H5.5 V7 H8 M8 10 H5.5 V15 H8" fill="none" stroke="#c8c8c8" stroke-width="1.8"/><path d="M11 3.5 H18.5 M11 5.5 H18.5 M11 11.5 H18.5 M11 13.5 H18.5" stroke="#c8c8c8" stroke-width="1.3"/></svg>
<svg class="a" style="left:403px;top:803px" width="14" height="14" viewBox="0 0 14 14"><path d="M6 1.5 V0.5 H13.5 V8 H12.5 M4 3.5 H11.5 V10.5" fill="none" stroke="#c8c8c8" stroke-width="1.1"/><rect x="0.8" y="5.3" width="9" height="8" fill="#2d2d30" stroke="#c8c8c8" stroke-width="1.4"/><path d="M2.5 9.5 H8" stroke="#1ba1e2" stroke-width="1.4"/></svg>
<svg class="a" style="left:428px;top:801px" width="18" height="18" viewBox="0 0 18 18"><path fill="#c8c8c8" fill-rule="evenodd" d="M7.5 0 H10.5 L11 2.8 L13.3 3.8 L15.6 2.2 L17.8 4.4 L16.2 6.7 L17.2 9 L18 9 V10.5 L15.2 11 L14.2 13.3 L15.8 15.6 L13.6 17.8 L11.3 16.2 L10.5 16.5 L10.5 18 H7.5 L7 15.2 L4.7 14.2 L2.4 15.8 L0.2 13.6 L1.8 11.3 L0.8 9 L0 9 V7.5 L2.8 7 L3.8 4.7 L2.2 2.4 L4.4 0.2 L6.7 1.8 L7 1.7 Z M9 5.5 A3.5 3.5 0 1 0 9 12.5 A3.5 3.5 0 1 0 9 5.5 Z M9 7.3 A1.7 1.7 0 1 1 9 10.7 A1.7 1.7 0 1 1 9 7.3Z"/></svg>
<svg class="a" style="left:454px;top:809px" width="8" height="4" viewBox="0 0 8 4"><path d="M0 0H8L4 4Z" fill="#999"/></svg>
<!-- search -->
<div class="a" style="left:1523px;top:796px;width:312px;height:27px;background:#333337;border:1px solid #3f3f46"></div>
<div class="a" style="left:1820px;top:797px;width:15px;height:25px;background:#3a3a3e"></div>
<div class="t" style="left:1529px;--b:816px;font-size:14.3px;color:#999">Pesquisar Gerenciador de Testes</div>
<svg class="a" style="left:1800px;top:801px" width="16" height="16" viewBox="0 0 16 16"><circle cx="10.5" cy="5.5" r="4.2" fill="none" stroke="#f1f1f1" stroke-width="2"/><path d="M7.5 8.5 L1.5 14.5" stroke="#f1f1f1" stroke-width="2.8" stroke-linecap="round"/></svg>
<svg class="a" style="left:1822px;top:808px" width="8" height="4" viewBox="0 0 8 4"><path d="M0 0H8L4 4Z" fill="#f1f1f1"/></svg>
<!-- list -->
<div class="a" style="left:41px;top:828px;width:1204px;height:168px;background:#252526"></div>
<div class="a" style="left:44px;top:854px;width:1201px;height:2px;background:#3f3f46"></div>
<div class="a" style="left:975px;top:830px;width:1px;height:24px;background:#3f3f46"></div>
<div class="a" style="left:1068px;top:830px;width:1px;height:24px;background:#3f3f46"></div>
<div class="a" style="left:1162px;top:830px;width:1px;height:24px;background:#3f3f46"></div>
<div class="t" style="left:49px;--b:848px;font-size:14.5px">Teste</div>
<div class="t" style="left:980px;--b:848.5px;font-size:14.5px">Duração</div>
<div class="t" style="left:1074px;--b:848.5px;font-size:14.5px">Caracterís...</div>
<div class="t" style="left:1168px;--b:848.5px;font-size:14.5px">Mensagem</div>
<div class="a" style="left:41px;top:856px;width:1204px;height:24px;background:#3f3f46"></div>
<!-- rows -->
<svg class="a" style="left:49px;top:864px" width="8" height="8" viewBox="0 0 8 8"><path d="M8 0V8H0Z" fill="#e8e8e8"/></svg>
<svg class="a" style="left:64px;top:858px" width="20" height="20" viewBox="0 0 20 20"><circle cx="10" cy="10" r="9.8" fill="#eef5ee"/><circle cx="10" cy="10" r="8.5" fill="#339933"/><path d="M6 11.6 L8.6 10.9 L10.2 13.3 L14.6 6.6 L16.8 7 L10.9 16.4 L9.1 16.4 Z" fill="#fff"/></svg>
<div class="t" style="left:90px;--b:874px;font-size:14.5px">ArtigoXUnitTestes.UnitTests&nbsp; (1)</div>
<div class="t" style="left:1031px;--b:874px;font-size:14.5px">6 ms</div>
<svg class="a" style="left:62px;top:889px" width="8" height="8" viewBox="0 0 8 8"><path d="M8 0V8H0Z" fill="#e8e8e8"/></svg>
<svg class="a" style="left:76.5px;top:883px" width="20" height="20" viewBox="0 0 20 20"><circle cx="10" cy="10" r="9.8" fill="#eef5ee"/><circle cx="10" cy="10" r="8.5" fill="#339933"/><path d="M6 11.6 L8.6 10.9 L10.2 13.3 L14.6 6.6 L16.8 7 L10.9 16.4 L9.1 16.4 Z" fill="#fff"/></svg>
<div class="t" style="left:102.5px;--b:899px;font-size:14.5px">ArtigoXUnitTestes.UnitTests.Domain.Services&nbsp; (1)</div>
<div class="t" style="left:1031px;--b:899px;font-size:14.5px">6 ms</div>
<svg class="a" style="left:74px;top:914px" width="8" height="8" viewBox="0 0 8 8"><path d="M8 0V8H0Z" fill="#e8e8e8"/></svg>
<svg class="a" style="left:88.5px;top:908px" width="20" height="20" viewBox="0 0 20 20"><circle cx="10" cy="10" r="9.8" fill="#eef5ee"/><circle cx="10" cy="10" r="8.5" fill="#339933"/><path d="M6 11.6 L8.6 10.9 L10.2 13.3 L14.6 6.6 L16.8 7 L10.9 16.4 L9.1 16.4 Z" fill="#fff"/></svg>
<div class="t" style="left:114.5px;--b:924px;font-size:14.5px">OperacaoFinanceiraServiceTransferirTests&nbsp; (1)</div>
<div class="t" style="left:1031px;--b:924px;font-size:14.5px">6 ms</div>
<svg class="a" style="left:101px;top:933px" width="20" height="20" viewBox="0 0 20 20"><circle cx="10" cy="10" r="9.8" fill="#eef5ee"/><circle cx="10" cy="10" r="8.5" fill="#339933"/><path d="M6 11.6 L8.6 10.9 L10.2 13.3 L14.6 6.6 L16.8 7 L10.9 16.4 L9.1 16.4 Z" fill="#fff"/></svg>
<div class="t" style="left:127px;--b:949px;font-size:14.5px">ContaOrigemTemLimite_ChamadoComContasEValoresValidos_RetornarSucessoEDebitarDosSaldosELImiteCorretamente</div>
<div class="t" style="left:1031px;--b:949px;font-size:14.5px">6 ms</div>
<!-- hscroll -->
<div class="a" style="left:41px;top:975px;width:1204px;height:21px;background:#3e3e42"></div>
<svg class="a" style="left:48px;top:982px" width="7" height="10" viewBox="0 0 7 10"><path d="M7 0V10L0 5Z" fill="#999"/></svg>
<div class="a" style="left:62px;top:980px;width:813px;height:11px;background:#686868"></div>
<svg class="a" style="left:1231px;top:982px" width="7" height="10" viewBox="0 0 7 10"><path d="M0 0V10L7 5Z" fill="#999"/></svg>
<!-- splitter + summary -->
<div class="a" style="left:1245px;top:828px;width:5px;height:168px;background:#2d2d30"></div>
<div class="a" style="left:1250px;top:828px;width:585px;height:168px;background:#252526"></div>
<div class="t" style="left:1262px;--b:846.5px;font-size:16.5px;font-weight:bold;color:#fff">Resumo do grupo</div>
<div class="t" style="left:1277.5px;--b:876.3px;font-size:15.8px">ArtigoXUnitTestes.UnitTests</div>
<div class="t" style="left:1296px;--b:901.3px;font-size:15.7px">Testes em grupo<span class="mono" style="font-family:'Liberation Mono';font-size:14.67px">: 1</span></div>
<svg class="a" style="left:1296px;top:913px" width="18" height="18" viewBox="0 0 18 18"><circle cx="9" cy="9" r="8" fill="none" stroke="#999" stroke-width="1.6"/><path d="M8.5 4 V9.5 H13" fill="none" stroke="#999" stroke-width="1.6"/></svg>
<div class="t" style="left:1324.5px;--b:926.3px;font-size:15.8px">Duração total<span style="font-family:'Liberation Mono';font-size:14.67px">: 6 ms</span></div>
<div class="t" style="left:1277.5px;--b:961.3px;font-size:15.4px">Resultados</div>
<svg class="a" style="left:1295px;top:969px" width="20" height="20" viewBox="0 0 20 20"><circle cx="10" cy="10" r="9.8" fill="#eef5ee"/><circle cx="10" cy="10" r="8.5" fill="#339933"/><path d="M6 11.6 L8.6 10.9 L10.2 13.3 L14.6 6.6 L16.8 7 L10.9 16.4 L9.1 16.4 Z" fill="#fff"/></svg>
<div class="t" style="left:1324px;--b:985.8px;font-size:14.67px;font-family:'Liberation Mono'">1 Aprovado</div>
<!-- summary vscroll -->
<div class="a" style="left:1814px;top:828px;width:21px;height:168px;background:#3e3e42"></div>
<svg class="a" style="left:1818px;top:836px" width="12" height="6" viewBox="0 0 12 6"><path d="M0 6H12L6 0Z" fill="#999"/></svg>
<div class="a" style="left:1819px;top:849px;width:11px;height:108px;background:#686868"></div>
<svg class="a" style="left:1818px;top:981px" width="12" height="6" viewBox="0 0 12 6"><path d="M0 0H12L6 6Z" fill="#999"/></svg>

<!-- LISTA DE ERROS collapsed -->
<div class="a" style="left:40px;top:1005px;width:1796px;height:14px;background:#2d2d30;border:1px solid #3f3f46;border-bottom:none;overflow:hidden">
  <div class="t" style="left:5px;--b:19px;font-size:14.5px;color:#d0d0d0">Lista de Erros</div>
</div>
<div class="a" style="left:40px;top:1018px;width:1796px;height:1px;background:#3f3f46"></div>
<div class="a" style="left:143px;top:1016px;width:1620px;height:2px;background-image:radial-gradient(circle at 1px 1px,#4d4d52 0.6px,transparent 0.9px);background-size:5px 2px"></div>
<div class="a" style="left:1773px;top:1016px;width:11px;height:2px;background:#f1f1f1"></div>
<div class="a" style="left:1796px;top:1012px;width:5px;height:6px;border:1.4px solid #f1f1f1;border-bottom:none"></div>
<svg class="a" style="left:1814px;top:1013px" width="12" height="5" viewBox="0 0 12 5"><path d="M0.7 0.7 L4.5 4.5 M11.3 0.7 L7.5 4.5" stroke="#f1f1f1" stroke-width="1.6"/></svg>
<!-- bottom tabs -->
<div class="t" style="left:47px;--b:1035.5px;font-size:14.5px;color:#d0d0d0">Console do Gerenciador de Pacotes</div>
<div class="t" style="left:296px;--b:1035.5px;font-size:14.8px;color:#d0d0d0">Atividade de Publicação na Web</div>
<div class="a" style="left:518px;top:1018px;width:102px;height:25px;background:#252526;border:1px solid #3f3f46;border-top:none"></div>
<div class="t" style="left:525px;--b:1035.5px;font-size:14.5px;color:#3399ff">Lista de Erros</div>
<div class="t" style="left:626.5px;--b:1035.5px;font-size:14.5px;color:#d0d0d0">Saída</div>

<!-- STATUS BAR -->
<div class="a" style="left:0;top:1049px;width:1920px;height:29px;background:#007acc"></div>
<div class="a" style="left:0;top:1078px;width:489px;height:2px;background:#3a3a3a"></div>
<div class="a" style="left:489px;top:1078px;width:1431px;height:2px;background:#1e2a38"></div>
<svg class="a" style="left:5px;top:1058px" width="21" height="14" viewBox="0 0 21 14"><path d="M4.5 0.8 H20 L16.5 13.2 H1 Z" fill="none" stroke="#fff" stroke-width="1.5"/></svg>
<div class="t" style="left:35px;--b:1070px;font-size:15px;color:#fff">Pronto</div>
<div class="t" style="left:924px;--b:1070px;font-size:15px;color:#fff">Lin 36</div>
<div class="t" style="left:1038px;--b:1070px;font-size:15px;color:#fff">Col 14</div>
<div class="t" style="left:1152px;--b:1070px;font-size:15px;color:#fff">Car 14</div>
<div class="t" style="left:1322px;--b:1070px;font-size:15px;color:#fff">INS</div>
<svg class="a" style="left:1452px;top:1059px" width="12" height="13" viewBox="0 0 12 13"><path d="M6 13 V1.5 M1 6.5 L6 1.2 L11 6.5" fill="none" stroke="#fff" stroke-width="2"/></svg>
<div class="t" style="left:1475px;--b:1070px;font-size:15px;color:#fff">0</div>
<svg class="a" style="left:1513px;top:1058px" width="14" height="14" viewBox="0 0 14 14"><path d="M9.5 1 L13 4.5 L4.5 13 H1 V9.5 Z" fill="#fff"/><path d="M8 2.5 L11.5 6" stroke="#007acc" stroke-width="1"/></svg>
<div class="t" style="left:1537px;--b:1070px;font-size:15px;color:#fff">5</div>
<svg class="a" style="left:1573px;top:1056px" width="18" height="18" viewBox="0 0 18 18"><path d="M9 0.5 L17.5 9 L9 17.5 L0.5 9Z" fill="#fff"/><path d="M6 4 L10 8 M9.5 7.5 V13 M9.5 8 L12.5 11" stroke="#007acc" stroke-width="1.4" fill="none"/><circle cx="9.5" cy="13" r="1.3" fill="#007acc"/><circle cx="12.5" cy="11" r="1.3" fill="#007acc"/></svg>
<div class="t" style="left:1599.5px;--b:1070px;font-size:15.2px;color:#fff">artigo-xunit-testes</div>
<svg class="a" style="left:1749px;top:1056px" width="18" height="17" viewBox="0 0 18 17"><path d="M9 16 V10 L2.5 2.5 M9 10 L15.5 2.5 M1.5 7 V1.5 H7 M11 1.5 H16.5 V7" fill="none" stroke="#d4d4d4" stroke-width="2.2"/></svg>
<div class="t" style="left:1775px;--b:1070px;font-size:14.6px;color:#fff">master</div>
<svg class="a" style="left:1827px;top:1061px" width="10" height="5" viewBox="0 0 10 5"><path d="M0 5H10L5 0Z" fill="#fff"/></svg>
<svg class="a" style="left:1871px;top:1055px" width="15" height="16" viewBox="0 0 15 16"><path d="M7.5 0.5 C4 0.5 2.5 3 2.5 6 V10 L0.5 13 H14.5 L12.5 10 V6 C12.5 3 11 0.5 7.5 0.5Z" fill="#c8c8c8"/><path d="M5.5 14 A2 2 0 0 0 9.5 14" fill="#c8c8c8"/></svg>
<div class="a" style="left:1882px;top:1061px;width:16px;height:16px;border-radius:50%;background:#e51400"></div>
<div class="t" style="left:1882px;width:16px;text-align:center;--b:1074px;font-size:13px;color:#fff">3</div>
</body></html>
